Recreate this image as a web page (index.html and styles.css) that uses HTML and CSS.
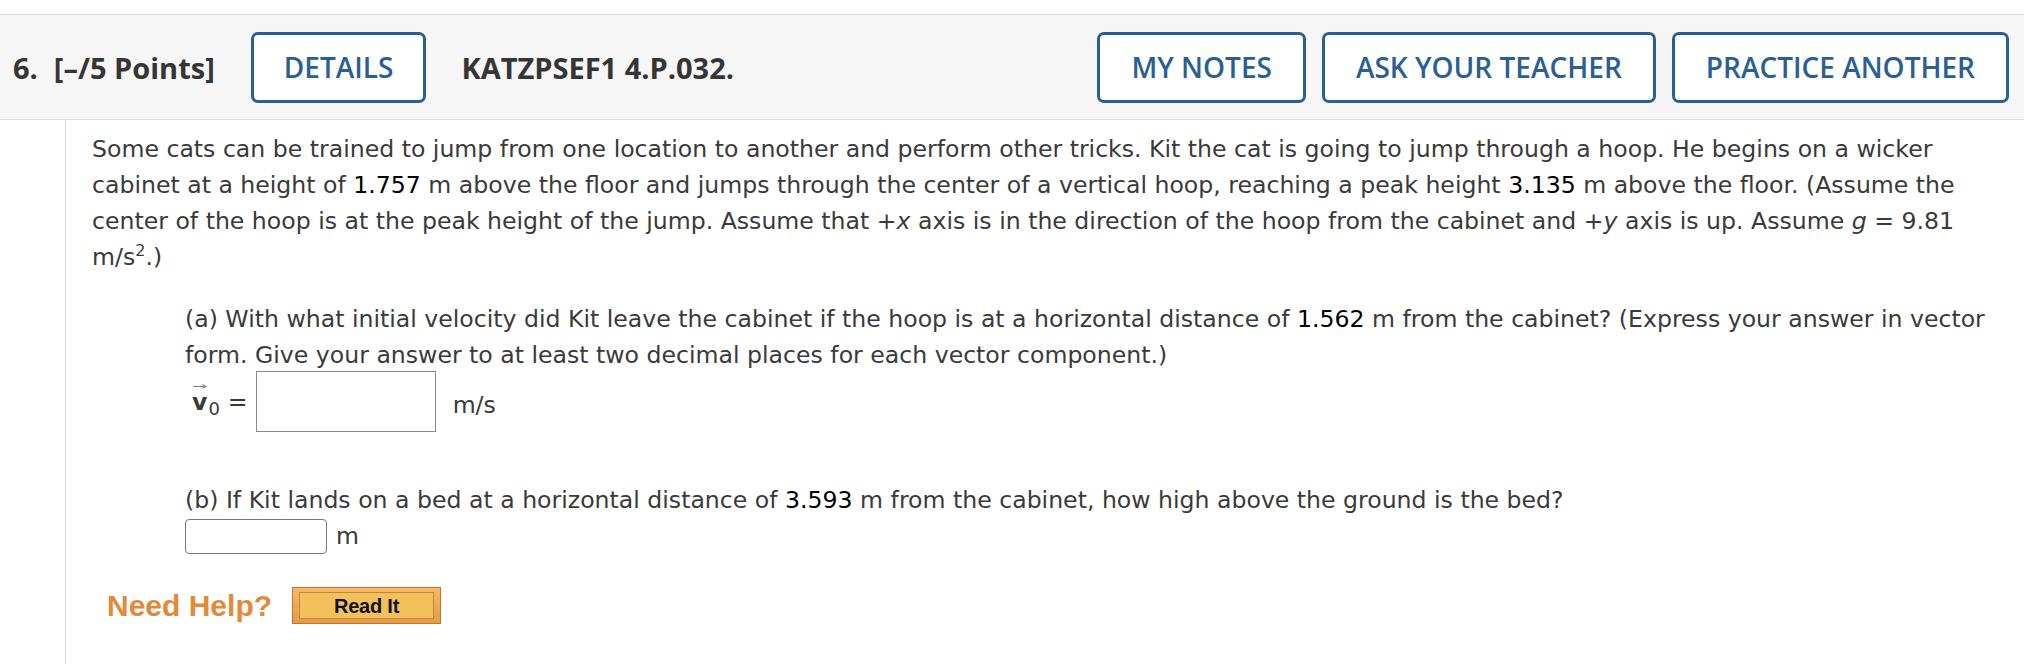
FILE: index.html
```html
<!DOCTYPE html>
<html lang="en">
<head>
<meta charset="utf-8">
<title>Question 6</title>
<link rel="stylesheet" href="styles.css">
</head>
<body>
<div class="top-gap"></div>
<header class="qbar">
  <span class="qnum">6.</span>
  <span class="qpoints">[–/5 Points]</span>
  <button class="qbtn qbtn-details">DETAILS</button>
  <span class="qref">KATZPSEF1 4.P.032.</span>
  <span class="qspacer"></span>
  <div class="qactions">
    <button class="qbtn">MY NOTES</button>
    <button class="qbtn">ASK YOUR TEACHER</button>
    <button class="qbtn">PRACTICE ANOTHER</button>
  </div>
</header>
<main class="qbody">
  <p class="intro">Some cats can be trained to jump from one location to another and perform other tricks. Kit the cat is going to jump through a hoop. He begins on a wicker cabinet at a height of <span class="val">1.757</span> m above the floor and jumps through the center of a vertical hoop, reaching a peak height <span class="val">3.135</span> m above the floor. (Assume the center of the hoop is at the peak height of the jump. Assume that +<i>x</i> axis is in the direction of the hoop from the cabinet and +<i>y</i> axis is up. Assume <i>g</i> = 9.81 m/s<sup>2</sup>.)</p>

  <section class="part">
    <p class="question">(a) With what initial velocity did Kit leave the cabinet if the hoop is at a horizontal distance of <span class="val">1.562</span> m from the cabinet? (Express your answer in vector form. Give your answer to at least two decimal places for each vector component.)</p>
    <div class="answer-row answer-row-a">
      <span class="vec"><span class="vec-v">v<svg class="vec-arrow" width="14" height="6" viewBox="0 0 14 6"><path d="M0 3.5H12" stroke="#888" stroke-width="1.2"/><path d="M9.5 1.5L13 3.5L9.5 5" fill="none" stroke="#888" stroke-width="1.2"/></svg></span><sub>0</sub></span>
      <span class="eq">=</span>
      <span class="input input-a"></span>
      <span class="unit">m/s</span>
    </div>
  </section>

  <section class="part part-b">
    <p class="question">(b) If Kit lands on a bed at a horizontal distance of <span class="val">3.593</span> m from the cabinet, how high above the ground is the bed?</p>
    <div class="answer-row">
      <span class="input input-b"></span>
      <span class="unit unit-b">m</span>
    </div>
  </section>

  <div class="help">
    <span class="help-label">Need Help?</span>
    <span class="read-it"><span class="read-it-inner">Read It</span></span>
  </div>
</main>
</body>
</html>
```

FILE: styles.css
```css
html, body {
  margin: 0;
  padding: 0;
  background: #ffffff;
}

.top-gap {
  height: 14px;
}

.qbar {
  display: flex;
  align-items: center;
  height: 104px;
  background: #f6f6f6;
  border-top: 1px solid #dcdcdc;
  border-bottom: 1px solid #dcdcdc;
  padding: 0 15px 0 13px;
  font-family: "Open Sans", "Liberation Sans", sans-serif;
  font-size: 29px;
  color: #353535;
  box-sizing: content-box;
}

.qnum {
  font-weight: 700;
}

.qpoints {
  font-weight: 700;
  margin-left: 16px;
}

.qref {
  font-weight: 700;
  margin-left: 35px;
}

.qspacer {
  flex: 1;
}

.qactions {
  display: flex;
  gap: 16px;
}

.qbtn {
  height: 71px;
  padding: 0 31px;
  background: #ffffff;
  border: 3px solid #2b5f93;
  border-radius: 7px;
  font-family: "Open Sans", "Liberation Sans", sans-serif;
  font-size: 28px;
  font-weight: 600;
  color: #2b5f93;
}

.qbtn-details {
  margin-left: 36px;
  padding: 0 30px;
}

.qbody {
  margin-left: 65px;
  border-left: 1px solid #dcdcdc;
  padding: 11px 10px 40px 26px;
  font-family: "DejaVu Sans", Verdana, sans-serif;
  font-size: 23.6px;
  line-height: 36px;
  color: #3a3a3a;
}

.qbody p {
  margin: 0;
}

.qbody .intro {
  margin-right: 24px;
}

.val {
  color: #000000;
}

sup {
  font-size: 16px;
  line-height: 0;
  vertical-align: 9px;
}

.part {
  margin-left: 93px;
  margin-top: 26px;
}

.part-b {
  margin-top: 50px;
}

.answer-row {
  display: flex;
  align-items: center;
}

.answer-row-a {
  margin-top: -2px;
}

.vec {
  margin-left: 7px;
  font-weight: 700;
}

.vec-v {
  position: relative;
}

.vec-arrow {
  position: absolute;
  left: 1px;
  top: -5px;
}

.vec sub {
  font-weight: 400;
  font-size: 18px;
  line-height: 0;
  vertical-align: -5px;
  margin-left: 1px;
}

.eq {
  margin-left: 8px;
  margin-right: 8px;
}

.input {
  display: block;
  background: #ffffff;
  box-sizing: border-box;
}

.input-a {
  width: 180px;
  height: 61px;
  border: 1px solid #8a8a8a;
}

.input-b {
  width: 142px;
  height: 35px;
  border: 1px solid #7a7a7a;
  border-radius: 4px;
}

.unit {
  margin-left: 17px;
  padding-top: 6px;
}

.unit-b {
  margin-left: 9px;
  padding-top: 0;
}

.help {
  display: flex;
  align-items: center;
  margin-top: 33px;
  margin-left: 15px;
}

.help-label {
  font-family: "Liberation Sans", Arial, sans-serif;
  font-weight: 700;
  font-size: 30px;
  line-height: 37px;
  color: #e2893a;
}

.read-it {
  display: block;
  margin-left: 20px;
  width: 149px;
  height: 37px;
  box-sizing: border-box;
  padding: 4px 6px;
  background: linear-gradient(#f6b866, #e99a3d);
  border: 1px solid #b9783a;
}

.read-it-inner {
  display: flex;
  align-items: center;
  justify-content: center;
  height: 100%;
  box-sizing: border-box;
  border: 1px solid #b98a45;
  background: #f3c15b;
  font-family: "Liberation Sans", Arial, sans-serif;
  font-weight: 700;
  font-size: 20px;
  color: #111111;
  letter-spacing: -0.2px;
}
```
